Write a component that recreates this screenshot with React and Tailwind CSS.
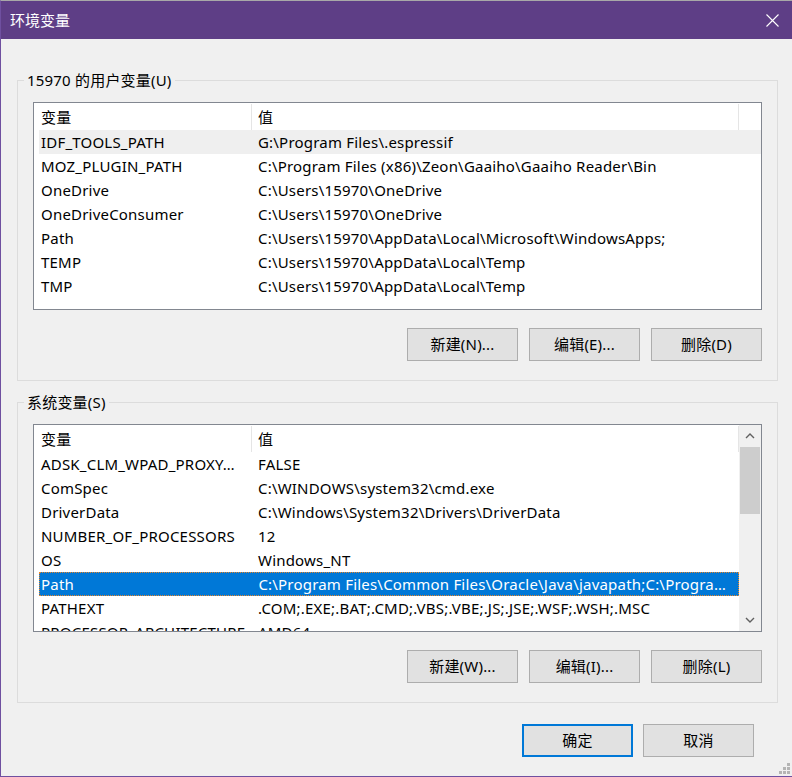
import React from 'react';

const userVars = [
  ['IDF_TOOLS_PATH', 'G:\\Program Files\\.espressif'],
  ['MOZ_PLUGIN_PATH', 'C:\\Program Files (x86)\\Zeon\\Gaaiho\\Gaaiho Reader\\Bin'],
  ['OneDrive', 'C:\\Users\\15970\\OneDrive'],
  ['OneDriveConsumer', 'C:\\Users\\15970\\OneDrive'],
  ['Path', 'C:\\Users\\15970\\AppData\\Local\\Microsoft\\WindowsApps;'],
  ['TEMP', 'C:\\Users\\15970\\AppData\\Local\\Temp'],
  ['TMP', 'C:\\Users\\15970\\AppData\\Local\\Temp'],
];

const sysVars = [
  ['ADSK_CLM_WPAD_PROXY…', 'FALSE'],
  ['ComSpec', 'C:\\WINDOWS\\system32\\cmd.exe'],
  ['DriverData', 'C:\\Windows\\System32\\Drivers\\DriverData'],
  ['NUMBER_OF_PROCESSORS', '12'],
  ['OS', 'Windows_NT'],
  ['Path', 'C:\\Program Files\\Common Files\\Oracle\\Java\\javapath;C:\\Progra…'],
  ['PATHEXT', '.COM;.EXE;.BAT;.CMD;.VBS;.VBE;.JS;.JSE;.WSF;.WSH;.MSC'],
  ['PROCESSOR_ARCHITECTURE', 'AMD64'],
];

const Header = () => (
  <div className="flex h-[26px] items-center shrink-0">
    <div className="w-[212px] pl-[2px]">变量</div>
    <div className="w-[488px] h-full flex items-center border-l border-r border-[#e5e5e5] pl-[6px]">值</div>
  </div>
);

const Row = ({ name, value, hover, selected }) => (
  <div
    className={`flex h-[24px] items-center shrink-0 whitespace-nowrap ${
      selected
        ? 'bg-[#0078d7] text-white border border-dotted border-[#e8862a]'
        : hover
        ? 'bg-[#efefef]'
        : ''
    }`}
  >
    <div className={`w-[212px] overflow-hidden ${selected ? 'pl-[1px]' : 'pl-[2px]'}`}>{name}</div>
    <div className="w-[488px] overflow-hidden pl-[7px]">{value}</div>
  </div>
);

const Chevron = ({ down }) => (
  <svg width="10" height="6" viewBox="0 0 10 6" fill="none">
    <path
      d={down ? 'M1 1 L5 5 L9 1' : 'M1 5 L5 1 L9 5'}
      stroke="#606060"
      strokeWidth="1.4"
    />
  </svg>
);

const Button = ({ children, primary }) => (
  <button
    className={`w-[111px] h-[33px] bg-[#e1e1e1] flex items-center justify-center ${
      primary ? 'border-2 border-[#0078d7]' : 'border border-[#adadad]'
    }`}
  >
    {children}
  </button>
);

const Group = ({ title, children, buttons }) => (
  <fieldset className="border border-[#dcdcdc] px-[15px] pb-[19px] min-w-0">
    <legend className="ml-[-9px] px-[3px] h-[20px] leading-[20px]">{title}</legend>
    <div className="mt-[12px]">{children}</div>
    <div className="mt-[18px] flex justify-end gap-[11px]">
      {buttons.map((b) => (
        <Button key={b}>{b}</Button>
      ))}
    </div>
  </fieldset>
);

export default function App() {
  return (
    <div className="w-[792px] h-[777px] bg-[#f0f0f0] flex flex-col border-t border-t-[#a8a8a8] border-l border-b border-[#6f50a0] text-black text-[15px] tracking-[0.2px] font-['Noto_Sans','Noto_Sans_CJK_SC',sans-serif] relative overflow-hidden">
      <div className="h-[38px] bg-[#5e3e86] flex items-center justify-between pl-[9px] pr-[13px] shrink-0 text-white tracking-normal">
        <span>环境变量</span>
        <svg width="13" height="13" viewBox="0 0 13 13">
          <path d="M0.5 0.5 L12.5 12.5 M12.5 0.5 L0.5 12.5" stroke="#ffffff" strokeWidth="1.1" />
        </svg>
      </div>

      <div className="pl-[16px] pr-[14px] flex flex-col">
        <div className="mt-[31px]">
          <Group title="15970 的用户变量(U)" buttons={['新建(N)...', '编辑(E)...', '删除(D)']}>
            <div className="h-[208px] border border-[#828790] bg-white pl-[5px] pt-[1px] flex flex-col overflow-hidden">
              <Header />
              {userVars.map(([n, v], i) => (
                <Row key={n} name={n} value={v} hover={i === 0} />
              ))}
            </div>
          </Group>
        </div>

        <div className="mt-[11px]">
          <Group title="系统变量(S)" buttons={['新建(W)...', '编辑(I)...', '删除(L)']}>
            <div className="h-[208px] border border-[#828790] bg-white pl-[5px] flex overflow-hidden">
              <div className="w-[700px] flex flex-col pt-[1px] overflow-hidden">
                <Header />
                {sysVars.map(([n, v]) => (
                  <Row key={n} name={n} value={v} selected={n === 'Path'} />
                ))}
              </div>
              <div className="w-[22px] bg-[#f0f0f0] flex flex-col items-center">
                <div className="h-[22px] w-full flex items-center justify-center">
                  <Chevron />
                </div>
                <div className="w-[20px] h-[67px] bg-[#cdcdcd]" />
                <div className="flex-1" />
                <div className="h-[22px] w-full flex items-center justify-center">
                  <Chevron down />
                </div>
              </div>
            </div>
          </Group>
        </div>

        <div className="mt-[21px] flex justify-end gap-[10px] pr-[24px]">
          <Button primary>确定</Button>
          <Button>取消</Button>
        </div>
      </div>

      <svg className="absolute right-[1px] bottom-[1px]" width="12" height="12" viewBox="0 0 12 12">
        <rect x="8" y="0" width="3" height="3" fill="#b4b4b4" />
        <rect x="4" y="4" width="3" height="3" fill="#b4b4b4" />
        <rect x="8" y="4" width="3" height="3" fill="#b4b4b4" />
        <rect x="0" y="8" width="3" height="3" fill="#b4b4b4" />
        <rect x="4" y="8" width="3" height="3" fill="#b4b4b4" />
        <rect x="8" y="8" width="3" height="3" fill="#b4b4b4" />
      </svg>
    </div>
  );
}
